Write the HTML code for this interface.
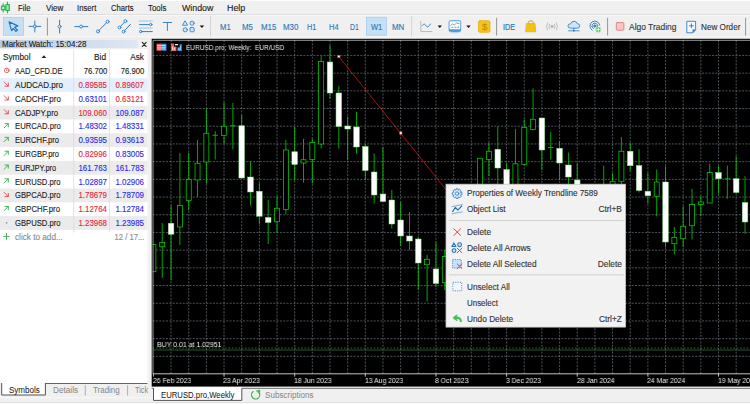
<!DOCTYPE html>
<html><head><meta charset="utf-8"><title>MetaTrader 5</title>
<style>
html,body{margin:0;padding:0}
body{width:750px;height:404px;overflow:hidden;position:relative;background:#f0f0f0;font-family:"Liberation Sans",sans-serif;}
.abs{position:absolute}
.t{position:absolute;white-space:pre;line-height:12px;margin-top:-6px;font-size:8.4px;color:#222;-webkit-text-stroke:0.12px currentColor}
.mn{font-size:8.3px;color:#1a1a1a}
.tf{color:#2a78b8;font-size:8.3px}
.tb{color:#333;font-size:8.4px}
.mw{font-size:8.3px;color:#1a1a1a}
.ck{color:#1a1a1a}.cr{color:#e8243c}.cb{color:#2a2af0}
.tab{font-size:8.3px;color:#1a1a1a;-webkit-text-stroke:0.04px currentColor}
.cl{font-size:7.3px;color:#ececec;-webkit-text-stroke:0;will-change:transform}
.cm{font-size:8.4px;color:#333}
</style></head>
<body>
<svg width="750" height="404" viewBox="0 0 750 404" style="position:absolute;left:0;top:0" shape-rendering="geometricPrecision">
<defs><linearGradient id="mwh" x1="0" x2="1" y1="0" y2="0"><stop offset="0" stop-color="#b9cbe3"/><stop offset="1" stop-color="#dfe8f4"/></linearGradient></defs>
<rect x="0" y="0" width="750" height="404" fill="#f0f0f0" />
<rect x="0" y="0" width="750" height="1.1" fill="#fdfdfd" />
<rect x="0" y="14.3" width="750" height="0.8" fill="#d8d8d8" />
<rect x="0" y="15.1" width="750" height="0.8" fill="#fafafa" />
<rect x="0" y="36.4" width="750" height="1.2" fill="#fafafa" />
<rect x="0" y="37.6" width="750" height="2.4" fill="#ececec" />
<rect x="3.55" y="17.55" width="19.9" height="17.7" fill="#c5dff5" stroke="#9ccbf2" stroke-width="0.7"/>
<rect x="366.35" y="17.25" width="20.2" height="18.0" fill="#c5dff5" stroke="#9ccbf2" stroke-width="0.7"/>
<path d="M47.4 17.8V35.6" stroke="#8a8a8a" stroke-width="0.9" fill="none" />
<path d="M496.6 17.8V35.6" stroke="#8a8a8a" stroke-width="0.9" fill="none" />
<path d="M607.6 17.8V35.6" stroke="#8a8a8a" stroke-width="0.9" fill="none" />
<path d="M745.6 17.8V35.6" stroke="#8a8a8a" stroke-width="0.9" fill="none" />
<path d="M210.5 16.6V36.4" stroke="#a4a4a4" stroke-width="0.9" fill="none" stroke-dasharray="0.7 1.05"/>
<path d="M411.6 16.6V36.4" stroke="#a4a4a4" stroke-width="0.9" fill="none" stroke-dasharray="0.7 1.05"/>
<rect x="0" y="49.3" width="147.6" height="333.9" fill="#ffffff" />
<rect x="0" y="40.0" width="137.7" height="8.1" fill="url(#mwh)" />
<rect x="0" y="78.10" width="147.4" height="13.8" fill="#e3f0fb" />
<rect x="0" y="105.70" width="147.4" height="13.8" fill="#ebebeb" />
<rect x="0" y="133.30" width="147.4" height="13.8" fill="#ebebeb" />
<rect x="0" y="160.90" width="147.4" height="13.8" fill="#ebebeb" />
<rect x="0" y="188.50" width="147.4" height="13.8" fill="#ebebeb" />
<rect x="0" y="216.10" width="147.4" height="13.8" fill="#ebebeb" />
<path d="M73.7 50V232.7M109.5 50V232.7" stroke="#d9d9d9" stroke-width="0.75" fill="none" />
<path d="M45.4 383.5H147.4" stroke="#5a5a5a" stroke-width="0.95" fill="none" />
<rect x="1.7" y="383.0" width="43.7" height="12.0" fill="#ffffff" />
<path d="M1.7 383V395H45.4V383" stroke="#4a4a4a" stroke-width="0.95" fill="none" />
<path d="M85.3 385.2V395.5M127.6 385.2V395.5" stroke="#9a9a9a" stroke-width="0.8" fill="none" />
<rect x="0" y="397.3" width="151.7" height="0.8" fill="#fafafa" />
<rect x="151.7" y="386.4" width="600" height="1.4" fill="#ffffff" />
<rect x="151.7" y="387.8" width="600" height="1.0" fill="#6a6a6a" />
<rect x="153.5" y="386.6" width="88.3" height="13.8" fill="#ffffff" />
<path d="M153.5 388.4V400.4H241.8V388.4" stroke="#4a4a4a" stroke-width="0.95" fill="none" />
<rect x="0" y="402.3" width="750" height="0.8" fill="#dcdcdc" />
<rect x="0" y="403.1" width="750" height="1" fill="#f6f6f6" />
</svg>
<svg id="chart" width="750" height="404" viewBox="0 0 750 404" style="position:absolute;left:0;top:0">
<defs><clipPath id="cc"><rect x="152.6" y="40" width="598" height="346.4"/></clipPath></defs>
<rect x="151.7" y="38.8" width="600" height="347.8" fill="#000"/>
<g clip-path="url(#cc)">
<path d="M152.6 55.45H750M152.6 73.15H750M152.6 90.85H750M152.6 108.55H750M152.6 126.25H750M152.6 143.95H750M152.6 161.65H750M152.6 179.35H750M152.6 197.05H750M152.6 214.75H750M152.6 232.45H750M152.6 250.15H750M152.6 267.85H750M152.6 285.55H750M152.6 303.25H750M152.6 320.95H750M152.6 338.65H750M152.6 356.35H750M171.06 40V373.8M188.72 40V373.8M206.38 40V373.8M224.04 40V373.8M241.70 40V373.8M259.36 40V373.8M277.02 40V373.8M294.68 40V373.8M312.34 40V373.8M330.00 40V373.8M347.66 40V373.8M365.32 40V373.8M382.98 40V373.8M400.64 40V373.8M418.30 40V373.8M435.96 40V373.8M453.62 40V373.8M471.28 40V373.8M488.94 40V373.8M506.60 40V373.8M524.26 40V373.8M541.92 40V373.8M559.58 40V373.8M577.24 40V373.8M594.90 40V373.8M612.56 40V373.8M630.22 40V373.8M647.88 40V373.8M665.54 40V373.8M683.20 40V373.8M700.86 40V373.8M718.52 40V373.8M736.18 40V373.8" stroke="#7a8692" stroke-width="0.62" stroke-dasharray="2 1.35" fill="none"/>
<path d="M153.40 244.5V271.75M162.23 223V278M171.06 205.5V280.5M179.89 153V245M188.72 153V210.5M197.55 140V197M206.38 108.75V183.75M215.21 131.25V159.5M212.41 135.25H218.01M224.04 102V143.75M232.87 103V149.5M230.07 125.75H235.67M241.70 115V178M250.53 161.25V205.5M259.36 182.5V224M268.19 200V244M277.02 196.25V233M285.85 140V214M294.68 127V180.5M303.51 138.75V182.5M312.34 138.75V183.5M321.17 56V148.5M330.00 45V98.5M338.83 86V148.5M347.66 116.5V160M356.49 111.75V153.5M365.32 143.5V180M374.15 153.5V203.5M382.98 147V201.5M391.81 190V228.5M400.64 202V246M409.47 212V249.75M418.30 237V289.75M427.13 254.75V301.5M435.96 242.25V287.25M444.79 249.75V290M480.11 158.25V200M488.94 142.5V176.25M497.77 126.25V200M506.60 163V200M515.43 128.75V200M524.26 119.5V165.5M533.09 88.5V130.5M541.92 118V170M550.75 132V159.5M547.95 147.5H553.55M559.58 141.25V180M568.41 152.5V200M577.24 163V200M603.73 165.5V200M612.56 173V200M621.39 137V200M630.22 142.5V171.25M639.05 149.25V192.5M647.88 172.5V203.75M656.71 169.5V216.25M665.54 166.25V247.5M674.37 227V254.5M683.20 206.25V247M692.03 188.75V239.5M700.86 196V216.25M709.69 163.75V203M718.52 166.25V193.75M727.35 165.5V198.75M724.55 178.75H730.15M736.18 156.25V193.75M745.01 176.25V233.75" stroke="#00e000" stroke-width="0.75" fill="none"/>
<g fill="#000" stroke="#00e000" stroke-width="0.7"><rect x="150.90" y="244.5" width="5.00" height="27.25"/><rect x="159.73" y="242.5" width="5.00" height="4.25"/><rect x="177.39" y="205.5" width="5.00" height="21.50"/><rect x="186.22" y="179.5" width="5.00" height="21.00"/><rect x="195.05" y="163.25" width="5.00" height="16.75"/><rect x="203.88" y="133.25" width="5.00" height="28.75"/><rect x="221.54" y="126.25" width="5.00" height="9.25"/><rect x="274.52" y="208.25" width="5.00" height="13.50"/><rect x="283.35" y="150" width="5.00" height="59.50"/><rect x="301.01" y="159.75" width="5.00" height="3.25"/><rect x="309.84" y="142.5" width="5.00" height="17.00"/><rect x="318.67" y="61.5" width="5.00" height="82.50"/><rect x="424.63" y="259.25" width="5.00" height="5.50"/><rect x="442.29" y="256.5" width="5.00" height="26.25"/><rect x="477.61" y="158.25" width="5.00" height="41.75"/><rect x="486.44" y="151.25" width="5.00" height="8.25"/><rect x="512.93" y="163.75" width="5.00" height="36.25"/><rect x="521.76" y="127.5" width="5.00" height="36.75"/><rect x="530.59" y="119.25" width="5.00" height="10.25"/><rect x="601.23" y="190" width="5.00" height="10.00"/><rect x="610.06" y="181.25" width="5.00" height="18.75"/><rect x="618.89" y="151.25" width="5.00" height="30.00"/><rect x="654.21" y="182" width="5.00" height="14.25"/><rect x="671.87" y="237.5" width="5.00" height="6.25"/><rect x="680.70" y="226.25" width="5.00" height="12.50"/><rect x="689.53" y="204.5" width="5.00" height="21.25"/><rect x="698.36" y="202" width="5.00" height="2.50"/><rect x="707.19" y="172.5" width="5.00" height="30.50"/></g>
<g fill="#fff" stroke="#7fdf7f" stroke-width="0.5"><rect x="168.26" y="223.25" width="5.60" height="11.00"/><rect x="238.90" y="125.75" width="5.60" height="52.25"/><rect x="247.73" y="177" width="5.60" height="15.00"/><rect x="256.56" y="191.25" width="5.60" height="25.00"/><rect x="265.39" y="217.5" width="5.60" height="5.00"/><rect x="291.88" y="151.75" width="5.60" height="12.75"/><rect x="327.20" y="62" width="5.60" height="31.00"/><rect x="336.03" y="93" width="5.60" height="33.50"/><rect x="344.86" y="126" width="5.60" height="3.00"/><rect x="353.69" y="127" width="5.60" height="20.00"/><rect x="362.52" y="146.5" width="5.60" height="24.00"/><rect x="371.35" y="172" width="5.60" height="23.00"/><rect x="380.18" y="194" width="5.60" height="7.50"/><rect x="389.01" y="200" width="5.60" height="24.00"/><rect x="397.84" y="220" width="5.60" height="16.00"/><rect x="406.67" y="236" width="5.60" height="5.00"/><rect x="415.50" y="239" width="5.60" height="24.00"/><rect x="433.16" y="269" width="5.60" height="14.50"/><rect x="494.97" y="149.25" width="5.60" height="18.75"/><rect x="503.80" y="169.5" width="5.60" height="30.50"/><rect x="539.12" y="118" width="5.60" height="32.00"/><rect x="556.78" y="148.25" width="5.60" height="14.75"/><rect x="565.61" y="165" width="5.60" height="12.00"/><rect x="574.44" y="180" width="5.60" height="20.00"/><rect x="627.42" y="151.25" width="5.60" height="14.50"/><rect x="636.25" y="165.5" width="5.60" height="25.00"/><rect x="645.08" y="191.25" width="5.60" height="4.50"/><rect x="662.74" y="182" width="5.60" height="60.00"/><rect x="715.72" y="172.5" width="5.60" height="6.25"/><rect x="733.38" y="178.75" width="5.60" height="13.75"/><rect x="742.21" y="202.5" width="5.60" height="19.50"/></g>
<path d="M338.75 56.5L446 189.6" stroke="#d01818" stroke-width="0.8" fill="none"/>
<rect x="337.6" y="55.3" width="2.4" height="2.4" fill="#fff" stroke="#ff2020" stroke-width="0.6"/>
<rect x="399.6" y="131.8" width="2.4" height="2.4" fill="#fff" stroke="#ff2020" stroke-width="0.6"/>
<path d="M152.6 348H750" stroke="#00c800" stroke-width="0.7" stroke-dasharray="1.6 1.7" fill="none"/>
<path d="M152.6 350H750" stroke="#6c7278" stroke-width="0.6" fill="none"/>
<path d="M152.6 373.8H750" stroke="#d8d8d8" stroke-width="0.9" fill="none"/>
<path d="M153.40 373.8V376.6M224.04 373.8V376.6M294.68 373.8V376.6M365.32 373.8V376.6M435.96 373.8V376.6M506.60 373.8V376.6M577.24 373.8V376.6M647.88 373.8V376.6M718.52 373.8V376.6" stroke="#d8d8d8" stroke-width="0.9" fill="none"/>
</g>
<path d="M153 373.8V40.3H750" stroke="#e0e0e0" stroke-width="0.7" fill="none"/>
</svg>
<svg width="750" height="404" viewBox="0 0 750 404" style="position:absolute;left:0;top:0;pointer-events:none" fill="none" stroke-linecap="round" stroke-linejoin="round">
<g stroke="#2bb54a" stroke-width="1.2"><path d="M3.2 3.8V11.8M7.5 2.2V12.8"/><rect x="1.5" y="6.1" width="3.4" height="3.6" fill="#c6efd0"/><rect x="5.9" y="4.5" width="3.4" height="6" fill="#9ee2b0"/></g>
<path d="M9.1 21.9L17.8 25.9L14.6 27.2L17.4 30.2L15.9 31.3L13.3 28.3L11.6 30.6Z" fill="#c4e3fc" stroke="#2674b8" stroke-width="1.2"/>
<path d="M29 26.4H40.8M34.8 21V32" stroke="#2f7fc2" stroke-width="1.0"/><circle cx="34.8" cy="26.4" r="1.45" fill="#e6f2fc" stroke="#2f7fc2" stroke-width="0.9"/>
<path d="M59.6 20.2V33" stroke="#2f7fc2" stroke-width="1.0"/><circle cx="59.6" cy="26.6" r="1.5" fill="#e6f2fc" stroke="#2f7fc2" stroke-width="0.9"/>
<path d="M74.7 26.6H87.9" stroke="#2f7fc2" stroke-width="1.0"/><circle cx="81.1" cy="26.6" r="1.5" fill="#e6f2fc" stroke="#2f7fc2" stroke-width="0.9"/>
<path d="M98 31.4L107.6 21.7" stroke="#2f7fc2" stroke-width="1.0"/><circle cx="98" cy="31.4" r="1.5" fill="#e6f2fc" stroke="#2f7fc2" stroke-width="0.9"/><circle cx="107.6" cy="21.7" r="1.5" fill="#e6f2fc" stroke="#2f7fc2" stroke-width="0.9"/>
<path d="M119.5 27.5L125.4 21.2M123.6 31.6L130.5 24.3" stroke="#2f7fc2" stroke-width="1.0"/><circle cx="119.5" cy="27.5" r="1.45" fill="#e6f2fc" stroke="#2f7fc2" stroke-width="0.9"/><circle cx="125.4" cy="21.2" r="1.45" fill="#e6f2fc" stroke="#2f7fc2" stroke-width="0.9"/><circle cx="123.6" cy="31.6" r="1.45" fill="#e6f2fc" stroke="#2f7fc2" stroke-width="0.9"/>
<path d="M139.5 21H152.3M139.5 28H152.3" stroke="#8fbfe6" stroke-width="0.9"/><path d="M139.5 24.6H150M141.6 31.6H152.3" stroke="#2f7fc2" stroke-width="1.0"/><circle cx="150.8" cy="24.6" r="1.2" fill="#e6f2fc" stroke="#2f7fc2" stroke-width="0.9"/><circle cx="140.8" cy="31.6" r="1.2" fill="#e6f2fc" stroke="#2f7fc2" stroke-width="0.9"/>
<path d="M163.2 22.5H171.6M167.4 22.5V30.5" stroke="#2f7fc2" stroke-width="0.95"/>
<g stroke="#2f7fc2" stroke-width="0.85" fill="#cfe6fa"><path d="M185.2 21.1L187.6 25.3H182.8Z"/><circle cx="192.1" cy="23.2" r="2.1"/><circle cx="185.2" cy="29.8" r="2.1"/><rect x="190" y="27.6" width="4.2" height="4.2" rx="0.8"/></g>
<path d="M199.70000000000002 25.4H204.1L201.9 28Z" fill="#111" stroke="none"/>
<path d="M437.6 25.4H442.0L439.8 28Z" fill="#111" stroke="none"/>
<path d="M466.3 25.4H470.7L468.5 28Z" fill="#111" stroke="none"/>
<path d="M420.8 21.3V31.6H432" stroke="#b9b9b9" stroke-width="1"/>
<path d="M422.4 25.6C423.6 23.6 424.6 23.6 425.8 25.4S428 27.4 429.2 25.6L430.4 24" stroke="#2f7fc2" stroke-width="0.95"/>
<rect x="448.6" y="20.3" width="12.6" height="11.8" rx="2" fill="#4f9add" stroke="none"/>
<rect x="449.5" y="21.2" width="10.8" height="8" rx="1" fill="#ffffff" stroke="none"/>
<path d="M450.6 25.4L452.6 24L454.4 25L456.6 23L459.2 23.6" stroke="#2f7fc2" stroke-width="0.7"/>
<path d="M451.2 28.1V27.2M452.7 28.1V26.8M454.2 28.1V27.4M455.7 28.1V26.6M457.2 28.1V27M458.7 28.1V26.2" stroke="#2fb850" stroke-width="0.8" stroke-linecap="butt"/>
<path d="M450.5 32.1Q455 33.6 459.5 32.1" stroke="#9cc6ea" stroke-width="0.8"/>
<rect x="478.5" y="20.7" width="11.5" height="11.6" rx="1.4" fill="#f7c21e" stroke="#e2a800" stroke-width="0.7"/>
<path d="M528.3 24.4V22.6Q528.3 20.8 530.8 20.8T533.3 22.6V24.4" stroke="#c89200" stroke-width="0.9"/>
<path d="M526.6 23.6H535L535.8 31.8H525.8Z" fill="#f5bf14" stroke="#e0a600" stroke-width="0.6"/>
<g stroke="#b4b4b4" stroke-width="0.85"><circle cx="552" cy="26.4" r="1.1" fill="#b4b4b4"/><path d="M549.6 24.2Q548.3 26.4 549.6 28.6M554.4 24.2Q555.7 26.4 554.4 28.6M547.6 22.8Q545.2 26.4 547.6 30M556.4 22.8Q558.8 26.4 556.4 30"/></g>
<path d="M570.6 28.2Q567.9 28.2 567.9 26T570.6 23.9Q571.4 21.3 574 21.3T577.3 23.7Q579.8 23.8 579.8 26T577.3 28.2Z" fill="#cfe6fa" stroke="#2f7fc2" stroke-width="0.85"/>
<path d="M573.8 28.3V30.6M568.6 30.8H579" stroke="#2f7fc2" stroke-width="0.85"/><circle cx="573.8" cy="30.8" r="0.9" fill="#2f7fc2" stroke="none"/>
<g stroke="#2f7fc2" stroke-width="0.95"><circle cx="594.8" cy="26" r="1.1" fill="#2f7fc2"/><path d="M597.4 27.4A2.9 2.9 0 1 0 593.4 28.6"/><path d="M599.8 25.2A5 5 0 1 0 592.2 30.3"/></g>
<circle cx="598.3" cy="29.6" r="2.8" fill="#3fc44f" stroke="#f0f0f0" stroke-width="0.6"/><path d="M596.7 29.6H599.9M598.3 28V31.2" stroke="#fff" stroke-width="0.9"/>
<rect x="616.3" y="22.6" width="7.6" height="7.6" rx="1" fill="#f9c7c7" stroke="#e26a6a" stroke-width="0.8"/>
<path d="M687.2 21.3H695.6V29.6L692.6 32.8H687.2Z" fill="#f3f9ff" stroke="#2f7fc2" stroke-width="0.9"/><path d="M695.4 29.8H692.8V32.6Z" fill="#2f7fc2" stroke="#2f7fc2" stroke-width="0.5"/>
<path d="M689.4 25.8H693.4M691.4 23.8V27.8" stroke="#2f7fc2" stroke-width="0.9"/>
<path d="M142.3 42.3L146.1 46.5M146.1 42.3L142.3 46.5" stroke="#1a1a1a" stroke-width="1.1"/>
<path d="M41.5 58.1H46.3L43.9 55.2Z" fill="#222" stroke="none"/>
<circle cx="6.8" cy="70.4" r="2.3" stroke="#e04848" stroke-width="0.85"/><path d="M6.8 69.2V70.7" stroke="#e04848" stroke-width="0.85"/>
<path d="M4.2 82.0L8.3 86.2M8.3 83.0V86.2H5" stroke="#e04848" stroke-width="0.9"/>
<path d="M4.2 95.80000000000001L8.3 100.00000000000001M8.3 96.80000000000001V100.00000000000001H5" stroke="#e04848" stroke-width="0.9"/>
<path d="M4.2 109.60000000000001L8.3 113.80000000000001M8.3 110.60000000000001V113.80000000000001H5" stroke="#e04848" stroke-width="0.9"/>
<path d="M4.2 127.80000000000001L8.3 123.60000000000001M8.3 126.80000000000001V123.60000000000001H5" stroke="#2fb045" stroke-width="0.9"/>
<path d="M4.2 141.59999999999997L8.3 137.39999999999998M8.3 140.59999999999997V137.39999999999998H5" stroke="#2fb045" stroke-width="0.9"/>
<path d="M4.2 155.39999999999998L8.3 151.2M8.3 154.39999999999998V151.2H5" stroke="#2fb045" stroke-width="0.9"/>
<path d="M4.2 169.2L8.3 165.0M8.3 168.2V165.0H5" stroke="#2fb045" stroke-width="0.9"/>
<path d="M4.2 183.0L8.3 178.8M8.3 182.0V178.8H5" stroke="#2fb045" stroke-width="0.9"/>
<path d="M4.2 192.4L8.3 196.6M8.3 193.4V196.6H5" stroke="#e04848" stroke-width="0.9"/>
<path d="M4.2 210.59999999999997L8.3 206.39999999999998M8.3 209.59999999999997V206.39999999999998H5" stroke="#2fb045" stroke-width="0.9"/>
<circle cx="6.6" cy="222.79999999999998" r="0.9" fill="#9a9a9a" stroke="none"/>
<path d="M3.6 236.4H9.4M6.5 233.5V239.3" stroke="#2fb045" stroke-width="0.9"/>
<path d="M253.3 391.5A4.1 4.1 0 1 0 259.2 392.9" stroke="#33b848" stroke-width="1.15"/><path d="M256.5 390.7L260 390.1L259.6 393.7Z" fill="#33b848" stroke="#33b848" stroke-width="0.5"/>
<g stroke="none"><rect x="156.5" y="43.6" width="5.1" height="7.2" fill="#e85050"/><rect x="161.6" y="43.6" width="4.9" height="7.2" fill="#2f86d6"/><path d="M157.2 45.4H165.8M157.2 47.2H165.8M157.2 49H165.8" stroke="#ffffff" stroke-width="0.75" stroke-linecap="butt"/></g>
<g stroke="none"><path d="M171 43.6H174V46.4H176.4V50.9H171Z" fill="#ec5c5c"/><path d="M172 46.6H173.2V50H172ZM173.8 47.6H175.2V50H173.8Z" fill="#f8c8c8"/><rect x="174.9" y="44" width="3.2" height="1.3" fill="#e6e6e6"/><path d="M179.6 44.2H181.8V50.9H177.4V47.2H179.6Z" fill="#3590e2"/><path d="M178.4 48.2H179.4V50H178.4ZM180.1 46H180.8V50H180.1Z" fill="#bcdcf8"/></g>
</svg>
<svg width="750" height="404" viewBox="0 0 750 404" style="position:absolute;left:0;top:0">
<rect x="446" y="184.2" width="179.5" height="142.9" fill="#f2f2f2" stroke="#c6c6c6" stroke-width="0.8"/>
<path d="M448.9 220.5H623.6M448.9 274.8H623.6" stroke="#c8c8c8" stroke-width="0.8" fill="none"/>
</svg>
<svg width="750" height="404" viewBox="0 0 750 404" style="position:absolute;left:0;top:0;pointer-events:none" fill="none" stroke-linecap="round" stroke-linejoin="round">
<path d="M461.90 192.63L461.90 194.57L460.61 195.04L460.61 195.06L461.18 196.31L459.81 197.68L458.56 197.11L458.54 197.11L458.07 198.40L456.13 198.40L455.66 197.11L455.64 197.11L454.39 197.68L453.02 196.31L453.59 195.06L453.59 195.04L452.30 194.57L452.30 192.63L453.59 192.16L453.59 192.14L453.02 190.89L454.39 189.52L455.64 190.09L455.66 190.09L456.13 188.80L458.07 188.80L458.54 190.09L458.56 190.09L459.81 189.52L461.18 190.89L460.61 192.14L460.61 192.16Z" fill="#cfe6fa" stroke="#2f7fc2" stroke-width="0.85"/><circle cx="457.1" cy="193.6" r="1.7" fill="#f2f2f2" stroke="#2f7fc2" stroke-width="0.85"/>
<path d="M452 206.6L462.2 204.6M452 213.8L462.2 211.8" stroke="#6aa9de" stroke-width="0.9"/><path d="M452.6 211.6L455.4 207.4L457.8 210.2L461.8 205.8" stroke="#1f6fb6" stroke-width="1.1"/>
<path d="M453.9 228.8L460.6 235.4M460.6 228.8L453.9 235.4" stroke="#e03c3c" stroke-width="0.95"/>
<g stroke="#2273b9" stroke-width="1.1" fill="#cfe6fa"><path d="M453.9 242.9L455.9 246.5H451.9Z"/><circle cx="459.6" cy="244.7" r="1.9"/><circle cx="454.05" cy="250.6" r="1.9"/></g>
<path d="M457.2 248.2L461.9 252.8M461.9 248.2L457.2 252.8" stroke="#e03c3c" stroke-width="1"/>
<rect x="452.6" y="259.6" width="8.7" height="8.4" fill="#c4e2fb" stroke="#2f7fc2" stroke-width="0.8" stroke-dasharray="1.2 1.1" stroke-linecap="butt"/>
<path d="M457.2 263.9L461.9 268.5M461.9 263.9L457.2 268.5" stroke="#e03c3c" stroke-width="1"/>
<rect x="452.9" y="282.3" width="8.8" height="8.5" fill="#f4f8fc" stroke="#2f7fc2" stroke-width="0.8" stroke-dasharray="1.2 1.1" stroke-linecap="butt"/>
<path d="M456.4 317.7Q460.5 317.3 460.9 321.2" stroke="#3fbf55" stroke-width="2"/><path d="M456.6 315.1L453 317.8L456.6 320.6Z" fill="#3fbf55" stroke="#3fbf55" stroke-width="0.9"/>
</svg>
<span class="t mn" id="t0" style="top:8.40px;left:18.30px;transform:scaleX(0.9346);transform-origin:left center;">File</span>
<span class="t mn" id="t1" style="top:8.40px;left:46.20px;transform:scaleX(0.9695);transform-origin:left center;">View</span>
<span class="t mn" id="t2" style="top:8.40px;left:77.40px;transform:scaleX(0.9294);transform-origin:left center;">Insert</span>
<span class="t mn" id="t3" style="top:8.40px;left:111.30px;transform:scaleX(0.9248);transform-origin:left center;">Charts</span>
<span class="t mn" id="t4" style="top:8.40px;left:148.20px;transform:scaleX(0.9548);transform-origin:left center;">Tools</span>
<span class="t mn" id="t5" style="top:8.40px;left:182.00px;transform:scaleX(1.0638);transform-origin:left center;">Window</span>
<span class="t mn" id="t6" style="top:8.40px;left:227.00px;transform:scaleX(1.0715);transform-origin:left center;">Help</span>
<span class="t tf" id="t7" style="top:27.00px;left:220.00px;transform:scaleX(0.9279);transform-origin:left center;">M1</span>
<span class="t tf" id="t8" style="top:27.00px;left:241.70px;transform:scaleX(0.9539);transform-origin:left center;">M5</span>
<span class="t tf" id="t9" style="top:27.00px;left:261.00px;transform:scaleX(0.9541);transform-origin:left center;">M15</span>
<span class="t tf" id="t10" style="top:27.00px;left:282.70px;transform:scaleX(0.9541);transform-origin:left center;">M30</span>
<span class="t tf" id="t11" style="top:27.00px;left:306.70px;transform:scaleX(0.8766);transform-origin:left center;">H1</span>
<span class="t tf" id="t12" style="top:27.00px;left:328.80px;transform:scaleX(0.9049);transform-origin:left center;">H4</span>
<span class="t tf" id="t13" style="top:27.00px;left:350.40px;transform:scaleX(0.8295);transform-origin:left center;">D1</span>
<span class="t tf" id="t14" style="top:27.00px;left:370.70px;transform:scaleX(0.9074);transform-origin:left center;">W1</span>
<span class="t tf" id="t15" style="top:27.00px;left:392.00px;transform:scaleX(0.9530);transform-origin:left center;">MN</span>
<span class="t tf" id="t16" style="top:27.00px;left:503.30px;transform:scaleX(0.8668);transform-origin:left center;-webkit-text-stroke:0.2px currentColor">IDE</span>
<span class="t tf" id="t17" style="top:26.70px;left:481.90px;color:#b88600;font-size:9.6px;-webkit-text-stroke:0">$</span>
<span class="t tb" id="t18" style="top:27.00px;left:629.00px;transform:scaleX(1.0078);transform-origin:left center;">Algo Trading</span>
<span class="t tb" id="t19" style="top:27.00px;left:700.60px;transform:scaleX(0.9728);transform-origin:left center;">New Order</span>
<span class="t mw" id="t20" style="top:44.20px;left:1.50px;transform:scaleX(0.9626);transform-origin:left center;">Market Watch: 15:04:28</span>
<span class="t mw" id="t21" style="top:57.40px;left:3.20px;transform:scaleX(0.9938);transform-origin:left center;">Symbol</span>
<span class="t mw" id="t22" style="top:57.40px;right:644.00px;">Bid</span>
<span class="t mw" id="t23" style="top:57.40px;right:606.00px;">Ask</span>
<span class="t mw" id="t24" style="top:71.20px;left:15.00px;transform:scaleX(0.9037);transform-origin:left center;">AAD_CFD.DE</span>
<span class="t mw ck" id="t25" style="top:71.20px;right:642.80px;transform:scaleX(0.9295);transform-origin:right center;">76.700</span>
<span class="t mw ck" id="t26" style="top:71.20px;right:605.60px;transform:scaleX(0.9295);transform-origin:right center;">76.900</span>
<span class="t mw" id="t27" style="top:85.00px;left:15.00px;transform:scaleX(0.9728);transform-origin:left center;">AUDCAD.pro</span>
<span class="t mw cr" id="t28" style="top:85.00px;right:642.80px;transform:scaleX(0.9533);transform-origin:right center;">0.89585</span>
<span class="t mw cr" id="t29" style="top:85.00px;right:605.60px;transform:scaleX(0.9533);transform-origin:right center;">0.89607</span>
<span class="t mw" id="t30" style="top:98.80px;left:15.00px;transform:scaleX(0.9551);transform-origin:left center;">CADCHF.pro</span>
<span class="t mw cb" id="t31" style="top:98.80px;right:642.80px;transform:scaleX(0.9533);transform-origin:right center;">0.63101</span>
<span class="t mw cr" id="t32" style="top:98.80px;right:605.60px;transform:scaleX(0.9533);transform-origin:right center;">0.63121</span>
<span class="t mw" id="t33" style="top:112.60px;left:15.00px;transform:scaleX(0.9376);transform-origin:left center;">CADJPY.pro</span>
<span class="t mw cr" id="t34" style="top:112.60px;right:642.80px;transform:scaleX(0.9533);transform-origin:right center;">109.060</span>
<span class="t mw cb" id="t35" style="top:112.60px;right:605.60px;transform:scaleX(0.9533);transform-origin:right center;">109.087</span>
<span class="t mw" id="t36" style="top:126.40px;left:15.00px;transform:scaleX(0.9282);transform-origin:left center;">EURCAD.pro</span>
<span class="t mw cb" id="t37" style="top:126.40px;right:642.80px;transform:scaleX(0.9533);transform-origin:right center;">1.48302</span>
<span class="t mw cb" id="t38" style="top:126.40px;right:605.60px;transform:scaleX(0.9533);transform-origin:right center;">1.48331</span>
<span class="t mw" id="t39" style="top:140.20px;left:15.00px;transform:scaleX(0.9196);transform-origin:left center;">EURCHF.pro</span>
<span class="t mw cb" id="t40" style="top:140.20px;right:642.80px;transform:scaleX(0.9533);transform-origin:right center;">0.93595</span>
<span class="t mw cb" id="t41" style="top:140.20px;right:605.60px;transform:scaleX(0.9533);transform-origin:right center;">0.93613</span>
<span class="t mw" id="t42" style="top:154.00px;left:15.00px;transform:scaleX(0.9134);transform-origin:left center;">EURGBP.pro</span>
<span class="t mw cr" id="t43" style="top:154.00px;right:642.80px;transform:scaleX(0.9533);transform-origin:right center;">0.82996</span>
<span class="t mw cb" id="t44" style="top:154.00px;right:605.60px;transform:scaleX(0.9533);transform-origin:right center;">0.83005</span>
<span class="t mw" id="t45" style="top:167.80px;left:15.00px;transform:scaleX(0.8963);transform-origin:left center;">EURJPY.pro</span>
<span class="t mw cb" id="t46" style="top:167.80px;right:642.80px;transform:scaleX(0.9533);transform-origin:right center;">161.763</span>
<span class="t mw cb" id="t47" style="top:167.80px;right:605.60px;transform:scaleX(0.9533);transform-origin:right center;">161.783</span>
<span class="t mw" id="t48" style="top:181.60px;left:15.00px;transform:scaleX(0.9241);transform-origin:left center;">EURUSD.pro</span>
<span class="t mw cb" id="t49" style="top:181.60px;right:642.80px;transform:scaleX(0.9533);transform-origin:right center;">1.02897</span>
<span class="t mw cb" id="t50" style="top:181.60px;right:605.60px;transform:scaleX(0.9533);transform-origin:right center;">1.02906</span>
<span class="t mw" id="t51" style="top:195.40px;left:15.00px;transform:scaleX(0.9241);transform-origin:left center;">GBPCAD.pro</span>
<span class="t mw cr" id="t52" style="top:195.40px;right:642.80px;transform:scaleX(0.9533);transform-origin:right center;">1.78679</span>
<span class="t mw cb" id="t53" style="top:195.40px;right:605.60px;transform:scaleX(0.9533);transform-origin:right center;">1.78709</span>
<span class="t mw" id="t54" style="top:209.20px;left:15.00px;transform:scaleX(0.9384);transform-origin:left center;">GBPCHF.pro</span>
<span class="t mw cr" id="t55" style="top:209.20px;right:642.80px;transform:scaleX(0.9533);transform-origin:right center;">1.12764</span>
<span class="t mw cb" id="t56" style="top:209.20px;right:605.60px;transform:scaleX(0.9533);transform-origin:right center;">1.12784</span>
<span class="t mw" id="t57" style="top:223.00px;left:15.00px;transform:scaleX(0.9241);transform-origin:left center;">GBPUSD.pro</span>
<span class="t mw cr" id="t58" style="top:223.00px;right:642.80px;transform:scaleX(0.9533);transform-origin:right center;">1.23968</span>
<span class="t mw cb" id="t59" style="top:223.00px;right:605.60px;transform:scaleX(0.9533);transform-origin:right center;">1.23985</span>
<span class="t mw" id="t60" style="top:236.80px;left:15.00px;transform:scaleX(0.9872);transform-origin:left center;color:#8a8a8a">click to add...</span>
<span class="t mw" id="t61" style="top:236.80px;right:605.40px;transform:scaleX(0.9227);transform-origin:right center;color:#8a8a8a">12 / 17...</span>
<span class="t tab" id="t62" style="top:390.40px;left:8.50px;transform:scaleX(0.9677);transform-origin:left center;">Symbols</span>
<span class="t tab" id="t63" style="top:390.40px;left:53.30px;transform:scaleX(0.9892);transform-origin:left center;color:#8a8a8a">Details</span>
<span class="t tab" id="t64" style="top:390.40px;left:92.80px;transform:scaleX(0.9595);transform-origin:left center;color:#8a8a8a">Trading</span>
<span class="t tab" id="t65" style="top:390.40px;left:135.00px;transform:scaleX(0.8855);transform-origin:left center;color:#8a8a8a">Tick</span>
<span class="t tab" id="t66" style="top:395.00px;left:160.70px;transform:scaleX(0.9328);transform-origin:left center;">EURUSD.pro,Weekly</span>
<span class="t tab" id="t67" style="top:395.00px;left:265.30px;transform:scaleX(0.9757);transform-origin:left center;color:#8a8a8a">Subscriptions</span>
<span class="t cl" id="t68" style="top:47.50px;left:185.80px;transform:scaleX(0.8915);transform-origin:left center;">EURUSD.pro; Weekly: &nbsp;EUR/USD</span>
<span class="t cl" id="t69" style="top:344.60px;left:157.00px;transform:scaleX(0.9538);transform-origin:left center;">BUY 0.01 at 1.02951</span>
<span class="t cl" id="t70" style="top:380.60px;left:152.70px;transform:scaleX(0.937);transform-origin:left center;">26 Feb 2023</span>
<span class="t cl" id="t71" style="top:380.60px;left:223.34px;transform:scaleX(0.937);transform-origin:left center;">23 Apr 2023</span>
<span class="t cl" id="t72" style="top:380.60px;left:293.98px;transform:scaleX(0.937);transform-origin:left center;">18 Jun 2023</span>
<span class="t cl" id="t73" style="top:380.60px;left:364.62px;transform:scaleX(0.937);transform-origin:left center;">13 Aug 2023</span>
<span class="t cl" id="t74" style="top:380.60px;left:435.26px;transform:scaleX(0.937);transform-origin:left center;">8 Oct 2023</span>
<span class="t cl" id="t75" style="top:380.60px;left:505.90px;transform:scaleX(0.937);transform-origin:left center;">3 Dec 2023</span>
<span class="t cl" id="t76" style="top:380.60px;left:576.54px;transform:scaleX(0.937);transform-origin:left center;">28 Jan 2024</span>
<span class="t cl" id="t77" style="top:380.60px;left:647.18px;transform:scaleX(0.937);transform-origin:left center;">24 Mar 2024</span>
<span class="t cl" id="t78" style="top:380.60px;left:717.82px;transform:scaleX(0.937);transform-origin:left center;">19 May 2024</span>
<span class="t cm" id="t79" style="top:193.20px;left:467.40px;transform:scaleX(0.9706);transform-origin:left center;">Properties of Weekly Trendline 7589</span>
<span class="t cm" id="t80" style="top:209.10px;left:467.40px;transform:scaleX(0.9728);transform-origin:left center;">Object List</span>
<span class="t cm" id="t81" style="top:231.90px;left:467.40px;transform:scaleX(0.9910);transform-origin:left center;">Delete</span>
<span class="t cm" id="t82" style="top:247.90px;left:467.40px;transform:scaleX(1.0077);transform-origin:left center;">Delete All Arrows</span>
<span class="t cm" id="t83" style="top:263.90px;left:467.40px;transform:scaleX(0.9899);transform-origin:left center;">Delete All Selected</span>
<span class="t cm" id="t84" style="top:286.70px;left:467.40px;transform:scaleX(0.9779);transform-origin:left center;">Unselect All</span>
<span class="t cm" id="t85" style="top:302.70px;left:467.40px;transform:scaleX(0.9480);transform-origin:left center;">Unselect</span>
<span class="t cm" id="t86" style="top:319.00px;left:467.40px;transform:scaleX(0.9901);transform-origin:left center;">Undo Delete</span>
<span class="t cm" id="t87" style="top:209.10px;right:128.10px;">Ctrl+B</span>
<span class="t cm" id="t88" style="top:263.90px;right:128.10px;">Delete</span>
<span class="t cm" id="t89" style="top:319.00px;right:128.10px;">Ctrl+Z</span>
</body></html>
